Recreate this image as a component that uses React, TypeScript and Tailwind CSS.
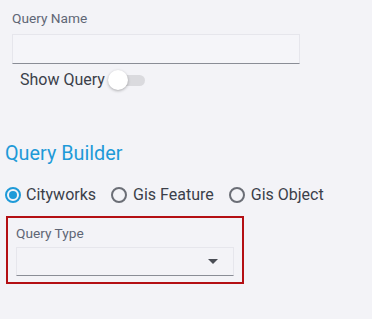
export default function App() {
  return (
    <div
      className="w-[372px] h-[319px] bg-[#f3f3f7] relative overflow-hidden"
      style={{ fontFamily: 'Roboto, "Liberation Sans", sans-serif' }}
    >
      <div className="pt-[10px] pl-[12px]">
        <div className="text-[13.7px] leading-[16px] text-[#5f6675]">Query Name</div>
        <div className="mt-[8px] w-[288px] h-[30px] bg-[#f5f5f9] border border-[#e6e6ec] border-b-[#8a8d96]" />
      </div>

      <div className="flex items-center mt-[5px] pl-[20px] h-[22px]">
        <span className="text-[16px] text-[#3b3f4a]">Show Query</span>
        <div className="relative ml-[3px] w-[40px] h-[22px]">
          <div className="absolute left-[8px] top-[6px] w-[29px] h-[11px] rounded-full bg-[#dadade]" />
          <div className="absolute left-0 top-[1px] w-[20px] h-[20px] rounded-full bg-white shadow-[0_1px_3px_rgba(0,0,0,0.3)]" />
        </div>
      </div>

      <div className="mt-[51px] pl-[5px] text-[19.8px] leading-[24px] text-[#1e9ad8]">Query Builder</div>

      <div className="flex items-center mt-[17px] pl-[5px] text-[16px] text-[#3b3f4a]">
        <div className="flex items-center">
          <span className="w-[16px] h-[16px] rounded-full border-2 border-[#1e9ad8] flex items-center justify-center">
            <span className="w-[8px] h-[8px] rounded-full bg-[#1e9ad8]" />
          </span>
          <span className="ml-[5px]">Cityworks</span>
        </div>
        <div className="flex items-center ml-[15px]">
          <span className="w-[16px] h-[16px] rounded-full border-2 border-[#6b6e76]" />
          <span className="ml-[6px]">Gis Feature</span>
        </div>
        <div className="flex items-center ml-[15px]">
          <span className="w-[16px] h-[16px] rounded-full border-2 border-[#6b6e76]" />
          <span className="ml-[6px]">Gis Object</span>
        </div>
      </div>

      <div className="mt-[9px] ml-[6px] w-[238px] h-[68px] border-2 border-[#b40f14] pt-[7px] pl-[8px]">
        <div className="text-[13.7px] leading-[16px] text-[#5f6675]">Query Type</div>
        <div className="relative mt-[6px] w-[218px] h-[29px] bg-[#f3f3f7] border border-[#e6e6ec] border-b-[#8a8d96]">
          <svg className="absolute left-[191px] top-[11px]" width="10" height="5" viewBox="0 0 10 5">
            <path d="M0 0 L10 0 L5 5 Z" fill="#4a4d55" />
          </svg>
        </div>
      </div>
    </div>
  );
}
